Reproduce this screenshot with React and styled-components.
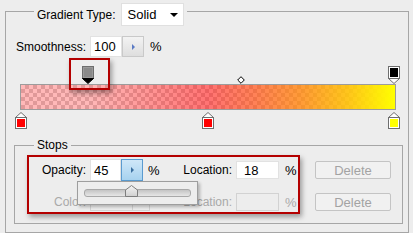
import React from "react";
import styled, { createGlobalStyle } from "styled-components";

const GlobalStyle = createGlobalStyle`
  html, body {
    margin: 0;
    padding: 0;
    background: #ededed;
  }
  body {
    font-family: "Liberation Sans", Arial, sans-serif;
    font-size: 12px;
    color: #000;
  }
`;

const Panel = styled.div`
  position: relative;
  width: 413px;
  height: 233px;
  overflow: hidden;
  background: #ededed;
  padding-top: 11px;
  box-sizing: border-box;
`;

const Group = styled.div`
  box-sizing: border-box;
  border: 1px solid #a6a6a6;
  margin-left: ${({ $left }) => $left}px;
  margin-top: ${({ $top }) => $top || 0}px;
  width: ${({ $w }) => $w}px;
  height: ${({ $h }) => $h}px;
`;

const Legend = styled.div`
  display: flex;
  align-items: center;
  gap: 5px;
  width: fit-content;
  background: #ededed;
  padding: 0 3px;
  margin-left: ${({ $left }) => $left}px;
  margin-top: ${({ $top }) => $top}px;
  height: ${({ $h }) => $h}px;
`;

const Select = styled.div`
  box-sizing: border-box;
  width: 63px;
  height: 23px;
  background: #fff;
  border: 1px solid #e0e0e0;
  display: flex;
  align-items: center;
  justify-content: space-between;
  padding: 0 5px 0 6px;
  font-size: 13px;
`;

const DropArrow = styled.span`
  width: 0;
  height: 0;
  border-left: 4px solid transparent;
  border-right: 4px solid transparent;
  border-top: 4px solid #000;
`;

const Row = styled.div`
  display: flex;
  align-items: center;
  height: ${({ $h }) => $h}px;
  margin-top: ${({ $top }) => $top}px;
  margin-left: ${({ $left }) => $left || 0}px;
`;

const Label = styled.span`
  box-sizing: border-box;
  width: ${({ $w }) => $w}px;
  text-align: ${({ $right }) => ($right ? "right" : "left")};
  padding-right: ${({ $right }) => ($right ? 4 : 0)}px;
  color: ${({ $disabled }) => ($disabled ? "#a9a9a9" : "#000")};
  white-space: nowrap;
`;

const InputGroup = styled.div`
  position: relative;
  display: flex;
  height: ${({ $h }) => $h}px;
`;

const Field = styled.div`
  box-sizing: border-box;
  width: ${({ $w }) => $w}px;
  height: ${({ $h }) => $h}px;
  background: ${({ $disabled }) => ($disabled ? "#ededed" : "#fff")};
  border: 1px solid ${({ $disabled }) => ($disabled ? "#d2d2d2" : "#e2e2e2")};
  display: flex;
  align-items: center;
  padding-left: ${({ $pad }) => $pad ?? 3}px;
  font-size: 13px;
`;

const Spinner = styled.div`
  box-sizing: border-box;
  width: 22px;
  height: 100%;
  display: flex;
  align-items: center;
  justify-content: center;
  border: 1px solid ${({ $active }) => ($active ? "#5b9bd0" : "#c9c9c9")};
  background: ${({ $active }) =>
    $active
      ? "linear-gradient(#cfe7f8, #a7d2ef)"
      : "linear-gradient(#f3f3f3, #dedede)"};
  &::after {
    content: "";
    border-top: 3px solid transparent;
    border-bottom: 3px solid transparent;
    border-left: 3px solid ${({ $active }) => ($active ? "#3a6f9f" : "#5b7bc4")};
  }
`;

const Pct = styled.span`
  box-sizing: border-box;
  width: ${({ $w }) => $w}px;
  padding-left: ${({ $pad }) => $pad}px;
  color: ${({ $disabled }) => ($disabled ? "#a9a9a9" : "#000")};
  font-size: 13px;
`;

const Editor = styled.div`
  position: relative;
  margin-left: 14px;
  width: 376px;
  padding-top: 27px;
  padding-bottom: 20px;
`;

const Bar = styled.div`
  box-sizing: border-box;
  height: 26px;
  border: 1px solid #9c9c9c;
  background:
    linear-gradient(
      to right,
      rgba(255, 0, 0, 0.28) 0%,
      rgba(255, 0, 0, 0.28) 18%,
      rgba(255, 0, 0, 0.55) 50%,
      rgba(255, 64, 0, 0.66) 62.5%,
      rgba(255, 128, 0, 0.78) 75%,
      rgba(255, 191, 0, 0.89) 87.5%,
      rgba(255, 255, 0, 1) 100%
    ),
    repeating-conic-gradient(#d4d4d4 0 25%, #ffffff 0 50%) 0 0 / 8px 8px;
`;

const Marker = styled.div`
  position: absolute;
  top: ${({ $top }) => $top}px;
  transform: translateX(-50%);
  line-height: 0;
`;

const Highlight = styled.div`
  position: absolute;
  box-sizing: border-box;
  border: 2px solid #b40000;
  box-shadow: 2px 3px 5px rgba(0, 0, 0, 0.35);
  left: ${({ $x }) => $x}px;
  top: ${({ $y }) => $y}px;
  width: ${({ $w }) => $w}px;
  height: ${({ $h }) => $h}px;
  pointer-events: none;
`;

const Button = styled.div`
  box-sizing: border-box;
  width: 76px;
  height: 18px;
  border: 1px solid #c4c4c4;
  border-radius: 2px;
  background: #f1f1f1;
  color: #a3a3a3;
  font-size: 13px;
  display: flex;
  align-items: center;
  justify-content: center;
`;

const Swatch = styled.div`
  box-sizing: border-box;
  display: flex;
  height: 18px;
  border: 1px solid #d2d2d2;
  width: 60px;
  & > span:last-child {
    margin-left: auto;
    width: 16px;
    border-left: 1px solid #d2d2d2;
  }
`;

const SliderPopup = styled.div`
  position: absolute;
  left: -13px;
  top: 100%;
  box-sizing: border-box;
  width: 121px;
  height: 24px;
  background: #ededed;
  border: 1px solid #9e9e9e;
  box-shadow: 2px 2px 3px rgba(0, 0, 0, 0.25);
  padding: 0 6px;
  display: flex;
  align-items: center;
  z-index: 2;
`;

const Track = styled.div`
  position: relative;
  flex: 1;
  height: 6px;
  border: 1px solid #a8a8a8;
  border-radius: 3px;
  background: linear-gradient(#c4c4c4, #e6e6e6);
`;

const Thumb = styled.svg`
  position: absolute;
  left: 40px;
  top: -5px;
`;

const TopStop = ({ fill, selected, ring }) => (
  <svg width="12" height="18" viewBox="0 0 12 18">
    <rect x="0.5" y="0.5" width="11" height="12" fill={ring} stroke="#6e6e6e" />
    <rect x="2" y="2" width="8" height="9" fill={fill} />
    <polygon
      points="0.5,12.5 11.5,12.5 6,17.5"
      fill={selected ? "#000" : "#fff"}
      stroke={selected ? "#000" : "#6e6e6e"}
    />
  </svg>
);

const BottomStop = ({ fill }) => (
  <svg width="12" height="17" viewBox="0 0 12 17">
    <polygon points="0.5,5.5 6,0.5 11.5,5.5" fill="#fff" stroke="#6e6e6e" />
    <rect x="0.5" y="5.5" width="11" height="11" fill="#fff" stroke="#6e6e6e" />
    <rect x="2" y="7" width="8" height="8" fill={fill} />
  </svg>
);

const Diamond = () => (
  <svg width="8" height="8" viewBox="0 0 8 8">
    <polygon points="4,0.7 7.3,4 4,7.3 0.7,4" fill="#fff" stroke="#000" />
  </svg>
);

const pos = (pct) => 1 + (pct / 100) * 373;

const opacityStops = [
  { at: 18, fill: "#8a8a8a", ring: "#9a9a9a", selected: true },
  { at: 100, fill: "#000", ring: "#fff", selected: false },
];

const colorStops = [
  { at: 0, fill: "#ff0000" },
  { at: 50, fill: "#ff0000" },
  { at: 100, fill: "#ffff00" },
];

export default function App() {
  return (
    <>
      <GlobalStyle />
      <Panel>
        <Group $left={5} $w={404} $h={222}>
          <Legend $left={28} $top={-9} $h={23}>
            <span>Gradient Type:</span>
            <Select>
              <span>Solid</span>
              <DropArrow />
            </Select>
          </Legend>

          <Row $top={10} $h={21} $left={10}>
            <Label $w={74}>Smoothness:</Label>
            <InputGroup $h={21}>
              <Field $w={32} $h={21}>100</Field>
              <Spinner />
            </InputGroup>
            <Pct $w={30} $pad={6}>%</Pct>
          </Row>

          <Editor>
            {opacityStops.map((s) => (
              <Marker key={s.at} $top={9} style={{ left: pos(s.at) }}>
                <TopStop {...s} />
              </Marker>
            ))}
            <Marker $top={19} style={{ left: pos(59) }}>
              <Diamond />
            </Marker>
            <Bar />
            {colorStops.map((s) => (
              <Marker key={s.at} $top={55} style={{ left: pos(s.at) }}>
                <BottomStop fill={s.fill} />
              </Marker>
            ))}
          </Editor>

          <Group $left={8} $top={15} $w={389} $h={79}>
            <Legend $left={19} $top={-9} $h={16}>
              <span>Stops</span>
            </Legend>

            <Row $top={6} $h={22}>
              <Label $w={75} $right>Opacity:</Label>
              <InputGroup $h={22}>
                <Field $w={31} $h={22}>45</Field>
                <Spinner $active />
                <SliderPopup>
                  <Track>
                    <Thumb width="13" height="12" viewBox="0 0 13 12">
                      <defs>
                        <linearGradient id="th" x1="0" y1="0" x2="0" y2="1">
                          <stop offset="0" stopColor="#f4f4f4" />
                          <stop offset="1" stopColor="#d0d0d0" />
                        </linearGradient>
                      </defs>
                      <polygon
                        points="6.5,0.5 12.5,5 12.5,11.5 0.5,11.5 0.5,5"
                        fill="url(#th)"
                        stroke="#7e7e7e"
                      />
                    </Thumb>
                  </Track>
                </SliderPopup>
              </InputGroup>
              <Pct $w={39} $pad={5}>%</Pct>
              <Label $w={54} $right>Location:</Label>
              <Field $w={43} $h={18} $pad={7}>18</Field>
              <Pct $w={36} $pad={6}>%</Pct>
              <Button>Delete</Button>
            </Row>

            <Row $top={12} $h={18}>
              <Label $w={75} $right $disabled>Color:</Label>
              <Swatch>
                <span />
                <span />
              </Swatch>
              <Pct $w={32} $pad={0} />
              <Label $w={54} $right $disabled>Location:</Label>
              <Field $w={43} $h={18} $disabled />
              <Pct $w={36} $pad={6} $disabled>%</Pct>
              <Button>Delete</Button>
            </Row>
          </Group>
        </Group>

        <Highlight $x={69} $y={58} $w={41} $h={32} />
        <Highlight $x={27} $y={155} $w={273} $h={59} />
      </Panel>
    </>
  );
}
